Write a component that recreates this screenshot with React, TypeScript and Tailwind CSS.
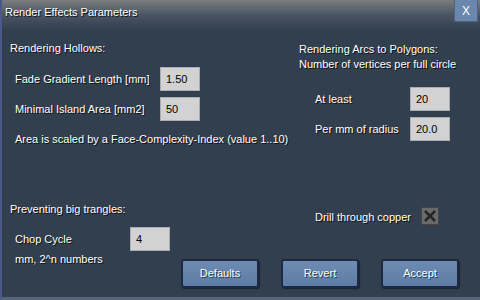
import React from "react";

const txt = "text-[11px] leading-[14px] text-white whitespace-nowrap [text-shadow:1px_1px_0_#111]";

function Field({ value }: { value: string }) {
  return (
    <div className="w-[40px] h-[24px] bg-[#d2d2d2] border border-[#a9adb3] flex items-center pl-[5px] text-[11px] text-black shrink-0">
      {value}
    </div>
  );
}

function Btn({ label }: { label: string }) {
  return (
    <div className="w-[78px] h-[29px] rounded-[3px] border-2 border-[#1d2943] bg-gradient-to-b from-[#6d8bb3] to-[#5d7ca4] flex items-center justify-center text-[11px] text-white [text-shadow:1px_1px_0_#2a3550] shadow-[1px_1px_1px_#1a2233]">
      {label}
    </div>
  );
}

export default function App() {
  return (
    <div
      className="w-[480px] h-[300px] bg-[#323f4f] border-l-2 border-[#4a588a] border-b-[3px] border-b-[#56657c] overflow-hidden flex flex-col"
      style={{ fontFamily: '"Liberation Sans", Arial, sans-serif' }}
    >
      {/* Title bar */}
      <div className="h-[30px] shrink-0 bg-gradient-to-b from-[#7b7d80] via-[#4a5564] to-[#323f4f] flex items-start justify-between">
        <div className={`${txt} pl-[3px] pt-[5px]`}>Render Effects Parameters</div>
        <div className="w-[24px] h-[22px] mr-[2px] bg-[#6a87ae] border border-[#4c6286] border-t-0 rounded-b-[2px] flex items-center justify-center text-[12px] text-white">
          X
        </div>
      </div>

      {/* Top section */}
      <div className="flex pl-[8px] h-[172px] shrink-0">
        <div className="w-[289px] flex flex-col">
          <div className={`${txt} mt-[11px]`}>Rendering Hollows:</div>
          <div className="flex items-center mt-[12px] ml-[5px]">
            <div className={`${txt} w-[145px]`}>Fade Gradient Length [mm]</div>
            <Field value="1.50" />
          </div>
          <div className="flex items-center mt-[6px] ml-[5px]">
            <div className={`${txt} w-[145px]`}>Minimal Island Area [mm2]</div>
            <Field value="50" />
          </div>
          <div className={`${txt} mt-[11px] ml-[5px]`}>
            Area is scaled by a Face-Complexity-Index (value 1..10)
          </div>
        </div>
        <div className="flex flex-col">
          <div className="mt-[12px] text-[11px] leading-[15px] text-white whitespace-nowrap [text-shadow:1px_1px_0_#111]">
            Rendering Arcs to Polygons:
            <br />
            Number of vertices per full circle
          </div>
          <div className="flex items-center mt-[15px] ml-[16px]">
            <div className={`${txt} w-[95px]`}>At least</div>
            <Field value="20" />
          </div>
          <div className="flex items-center mt-[6px] ml-[16px]">
            <div className={`${txt} w-[95px]`}>Per mm of radius</div>
            <Field value="20.0" />
          </div>
        </div>
      </div>

      {/* Bottom section */}
      <div className="flex pl-[8px]">
        <div className="w-[171px] flex flex-col">
          <div className={txt}>Preventing big trangles:</div>
          <div className="flex items-center mt-[11px] ml-[5px]">
            <div className={`${txt} w-[115px]`}>Chop Cycle</div>
            <Field value="4" />
          </div>
          <div className={`${txt} mt-[1px] ml-[5px]`}>mm, 2^n numbers</div>
        </div>
        <div className="flex flex-col">
          <div className="flex items-center mt-[5px] ml-[134px]">
            <div className={`${txt} w-[106px] pt-[1px]`}>Drill through copper</div>
            <div className="w-[18px] h-[18px] bg-[#6a6a6a] border border-[#454545] flex items-center justify-center">
              <svg width="14" height="14" viewBox="0 0 14 14">
                <path d="M2 2 L12 12 M12 2 L2 12" stroke="#262626" strokeWidth="2.6" />
              </svg>
            </div>
          </div>
          <div className="flex gap-[22px] mt-[34px]">
            <Btn label="Defaults" />
            <Btn label="Revert" />
            <Btn label="Accept" />
          </div>
        </div>
      </div>
    </div>
  );
}
